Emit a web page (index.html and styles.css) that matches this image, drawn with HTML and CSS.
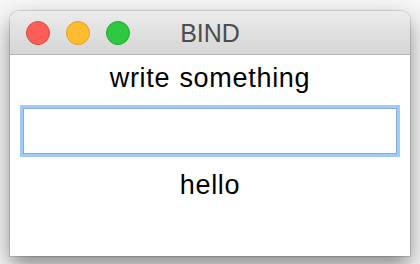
FILE: index.html
```html
<!DOCTYPE html>
<html>
<head>
<meta charset="utf-8">
<link rel="stylesheet" href="styles.css">
</head>
<body>
<div class="window">
  <div class="titlebar">
    <div class="lights">
      <span class="light red"></span>
      <span class="light yellow"></span>
      <span class="light green"></span>
    </div>
    <div class="title">BIND</div>
  </div>
  <div class="content">
    <div class="label">write something</div>
    <input class="field" type="text">
    <div class="label">hello</div>
  </div>
</div>
</body>
</html>
```

FILE: styles.css
```css
html, body {
  margin: 0;
  padding: 0;
}
body {
  width: 420px;
  height: 264px;
  background: #f6f6f6;
  overflow: hidden;
  font-family: "Liberation Sans", Arial, sans-serif;
  padding-top: 11px;
  padding-left: 10px;
  box-sizing: border-box;
}
.window {
  width: 400px;
  height: 245px;
  background: #fff;
  border-radius: 9px 9px 0 0;
  box-shadow: 0 0 0 1px rgba(0,0,0,0.12), 0 10px 22px rgba(0,0,0,0.45);
  display: flex;
  flex-direction: column;
  overflow: hidden;
}
.titlebar {
  height: 43px;
  flex: none;
  background: linear-gradient(#ececec, #d5d5d5);
  border-bottom: 1px solid #b5b5b5;
  position: relative;
  display: flex;
  align-items: center;
}
.lights {
  display: flex;
  gap: 16px;
  padding-left: 16px;
}
.light {
  width: 22px;
  height: 22px;
  border-radius: 50%;
  display: block;
}
.red { background: #fd5f58; border: 1px solid #e1463f; }
.yellow { background: #febc2e; border: 1px solid #dfa023; }
.green { background: #2fc842; border: 1px solid #1dab2c; }
.title {
  position: absolute;
  left: 0;
  right: 0;
  top: 0;
  bottom: 0;
  display: flex;
  align-items: center;
  justify-content: center;
  font-size: 25px;
  color: #4d4d4d;
  padding-top: 2px;
}
.content {
  display: flex;
  flex-direction: column;
  align-items: center;
  padding-top: 7px;
}
.label {
  font-size: 27px;
  line-height: 32px;
  color: #000;
  letter-spacing: 0.7px;
  word-spacing: 1px;
}
.field {
  margin: 14px 0 15px;
  width: 374px;
  height: 46px;
  box-sizing: border-box;
  border: 1px solid #86acdc;
  outline: 3px solid #a0cbf8;
  background: #fff;
  padding: 0;
}
```
